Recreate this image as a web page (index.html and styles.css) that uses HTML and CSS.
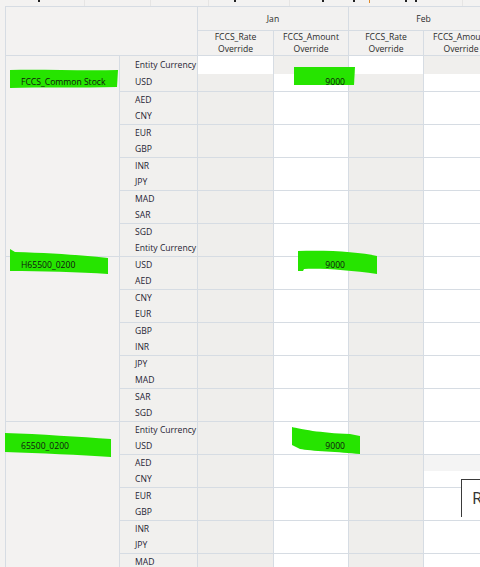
FILE: index.html
```html
<!DOCTYPE html>
<html lang="en">
<head>
<meta charset="utf-8">
<title>FCCS grid</title>
<link rel="stylesheet" href="styles.css">
</head>
<body>
<div class="page">
  <div class="toolbar">
    <span class="tb-seg w85"><i class="mk m1"></i></span>
    <span class="tb-seg w66"></span>
    <span class="tb-seg w58"></span>
    <span class="tb-seg w81"><i class="mk m2"></i></span>
    <span class="tb-seg w173"><i class="mk m3"></i><i class="mk m4"></i><i class="mk or"></i><i class="mk m5"></i><i class="mk m6"></i></span>
  </div>

  <div class="grid">
    <div class="hd-corner"></div>
    <div class="hd-month">Jan</div>
    <div class="hd-month">Feb</div>
    <div class="hd-sub"><span>FCCS_Rate</span><span>Override</span></div>
    <div class="hd-sub"><span>FCCS_Amount</span><span>Override</span></div>
    <div class="hd-sub"><span>FCCS_Rate</span><span>Override</span></div>
    <div class="hd-sub"><span>FCCS_Amount</span><span>Override</span></div>

    <div class="ent ent-1"><span class="txt">FCCS_Common Stock</span></div>
    <div class="ent ent-2"><span class="txt">H65500_0200</span></div>
    <div class="ent ent-3"><span class="txt">65500_0200</span></div>

    <!-- row 1 -->
    <div class="cur first"><span class="ln">Entity Currency</span><span class="ln">USD</span></div>
    <div class="rate first"><span class="ln alt"></span><span class="ln"></span></div>
    <div class="amt first"><span class="ln alt"></span><span class="ln num"><span class="txt">9000</span></span></div>
    <div class="rate first"><span class="ln alt"></span><span class="ln"></span></div>
    <div class="amt first"><span class="ln alt"></span><span class="ln"></span></div>
    <!-- row 2 -->
    <div class="cur"><span class="ln">AED</span><span class="ln">CNY</span></div>
    <div class="rate"></div><div class="amt"></div><div class="rate"></div><div class="amt"></div>
    <!-- row 3 -->
    <div class="cur"><span class="ln">EUR</span><span class="ln">GBP</span></div>
    <div class="rate"></div><div class="amt"></div><div class="rate"></div><div class="amt"></div>
    <!-- row 4 -->
    <div class="cur"><span class="ln">INR</span><span class="ln">JPY</span></div>
    <div class="rate"></div><div class="amt"></div><div class="rate"></div><div class="amt"></div>
    <!-- row 5 -->
    <div class="cur"><span class="ln">MAD</span><span class="ln">SAR</span></div>
    <div class="rate"></div><div class="amt"></div><div class="rate"></div><div class="amt"></div>
    <!-- row 6 -->
    <div class="cur"><span class="ln">SGD</span><span class="ln">Entity Currency</span></div>
    <div class="rate"></div><div class="amt"></div><div class="rate"></div><div class="amt"></div>
    <!-- row 7 -->
    <div class="cur"><span class="ln">USD</span><span class="ln">AED</span></div>
    <div class="rate"></div>
    <div class="amt"><span class="ln num"><span class="txt">9000</span></span><span class="ln"></span></div>
    <div class="rate"></div><div class="amt"></div>
    <!-- row 8 -->
    <div class="cur"><span class="ln">CNY</span><span class="ln">EUR</span></div>
    <div class="rate"></div><div class="amt"></div><div class="rate"></div><div class="amt"></div>
    <!-- row 9 -->
    <div class="cur"><span class="ln">GBP</span><span class="ln">INR</span></div>
    <div class="rate"></div><div class="amt"></div><div class="rate"></div><div class="amt"></div>
    <!-- row 10 -->
    <div class="cur"><span class="ln">JPY</span><span class="ln">MAD</span></div>
    <div class="rate"></div><div class="amt"></div><div class="rate"></div><div class="amt"></div>
    <!-- row 11 -->
    <div class="cur"><span class="ln">SAR</span><span class="ln">SGD</span></div>
    <div class="rate"></div><div class="amt"></div><div class="rate"></div><div class="amt"></div>
    <!-- row 12 -->
    <div class="cur"><span class="ln">Entity Currency</span><span class="ln">USD</span></div>
    <div class="rate"></div>
    <div class="amt"><span class="ln"></span><span class="ln num"><span class="txt">9000</span></span></div>
    <div class="rate"></div><div class="amt"></div>
    <!-- row 13 -->
    <div class="cur"><span class="ln">AED</span><span class="ln">CNY</span></div>
    <div class="rate"></div><div class="amt"></div><div class="rate"></div><div class="amt"></div>
    <!-- row 14 -->
    <div class="cur"><span class="ln">EUR</span><span class="ln">GBP</span></div>
    <div class="rate"></div><div class="amt"></div><div class="rate"></div><div class="amt"></div>
    <!-- row 15 -->
    <div class="cur"><span class="ln">INR</span><span class="ln">JPY</span></div>
    <div class="rate"></div><div class="amt"></div><div class="rate"></div><div class="amt"></div>
    <!-- row 16 -->
    <div class="cur"><span class="ln">MAD</span><span class="ln">SAR</span></div>
    <div class="rate"></div><div class="amt"></div><div class="rate"></div><div class="amt"></div>
  </div>

  <svg class="marks" width="480" height="567" viewBox="0 0 480 567" aria-hidden="true">
    <path d="M10,70 C40,69 80,71 118,70 L117,87 C80,88 40,87 10,88 Z"/>
    <path d="M294,67 L355,67 L354,85 L294,85 Z"/>
    <path d="M10,249 L15,252 C50,253 80,255 108,258 L108,274 C80,272 40,271 10,271 Z"/>
    <path d="M298,251 C330,250 360,252 377,256 L377,274 C350,270 320,268 304,269 L303,271 L298,271 Z"/>
    <path d="M5,433 C40,434 80,437 111,439 L111,457 C80,455 40,453 5,452 Z"/>
    <path d="M292,427 C300,429 320,433 350,434 L360,436 L360,454 C340,452 310,451 300,449 L292,445 Z"/>
  </svg>

  <div class="dlg-strip"></div>
  <div class="dlg"><span class="dlg-text">R</span></div>
</div>
</body>
</html>
```
FILE: styles.css
```css
* { box-sizing: border-box; }

html, body {
  margin: 0;
  padding: 0;
  background: #f3f2f1;
  overflow: hidden;
}

body {
  width: 480px;
  height: 567px;
  font-family: "Open Sans", "Noto Sans", sans-serif;
  font-size: 8.6px;
  color: #222;
}

.page {
  position: relative;
  width: 480px;
  height: 567px;
  overflow: hidden;
}

/* cut-off toolbar strip at the very top */
.toolbar {
  display: flex;
  height: 6px;
  overflow: hidden;
}
.tb-seg {
  display: flex;
  height: 6px;
  border-right: 1px solid #e6e5e4;
}
.w85 { width: 85px; }
.w66 { width: 66px; }
.w58 { width: 58px; }
.w81 { width: 81px; }
.w173 { width: 173px; }
.mk {
  display: block;
  width: 2px;
  height: 2px;
  background: #222;
}
.m1 { margin-left: 38px; }
.m2 { margin-left: 25px; }
.m3 { margin-left: 32px; }
.m4 { margin-left: 29px; }
.or { margin-left: 14px; background: #e08a2a; width: 1px; height: 3px; }
.m5 { margin-left: 35px; }
.m6 { margin-left: 8px; }

/* the grid */
.grid {
  display: grid;
  width: 493px;
  margin-left: 5px;
  grid-template-columns: 113px 77px 75px 74px 74px 74px;
  grid-template-rows: 23px 24px 35px repeat(15, 32px);
  gap: 1px;
  background: #d6dce3;
  border-left: 1px solid #d6dce3;
  border-top: 1px solid #d6dce3;
}

.hd-corner {
  grid-column: 1 / 3;
  grid-row: 1 / 3;
  background: #f3f2f1;
}
.hd-month {
  background: #f2f1f0;
  display: flex;
  align-items: center;
  justify-content: center;
  grid-column: span 2;
  color: #2b2b2b;
}
.hd-sub {
  background: #f2f1f0;
  display: flex;
  flex-direction: column;
  align-items: center;
  justify-content: center;
  line-height: 12px;
  color: #2b2b2b;
}

.ent {
  grid-column: 1;
  background: #f3f2f1;
  padding-left: 15px;
  line-height: 16px;
  color: #111;
}
.ent-1 { grid-row: 3 / span 6; padding-top: 18px; }
.ent-2 { grid-row: 9 / span 5; padding-top: 0; }
.ent-3 { grid-row: 14 / span 5; padding-top: 16px; }

.txt {
  position: relative;
  z-index: 2;
}

.cur {
  background: #f1f0ee;
  display: flex;
  flex-direction: column;
  padding-left: 15px;
  color: #1f2333;
}
.ln {
  display: block;
  height: 16px;
  line-height: 16px;
  white-space: nowrap;
}
.first .ln:first-child { height: 18px; line-height: 19px; }
.first .ln:last-child { height: 17px; line-height: 17px; }

.rate {
  background: #efeeec;
  display: flex;
  flex-direction: column;
}
.amt {
  background: #ffffff;
  display: flex;
  flex-direction: column;
}
.rate.first .alt { background: #ffffff; }
.amt.first .alt { background: #f0efed; }

.num {
  text-align: right;
  padding-right: 3px;
  color: #111;
}

/* hand-drawn green marker highlights */
.marks {
  position: absolute;
  left: 0;
  top: 0;
  z-index: 1;
  fill: #26e400;
}

/* partly visible overlapping dialog */
.dlg-strip {
  position: absolute;
  left: 424px;
  top: 455px;
  width: 56px;
  height: 16px;
  background: #f4f4f4;
}
.dlg {
  position: absolute;
  left: 461px;
  top: 479px;
  width: 40px;
  height: 38px;
  background: #fff;
  border-top: 1px solid #3a3a3a;
  border-left: 1px solid #3a3a3a;
  padding-left: 10px;
  font-family: "Open Sans", sans-serif;
  font-size: 17px;
  line-height: 36px;
  color: #333;
}
```
